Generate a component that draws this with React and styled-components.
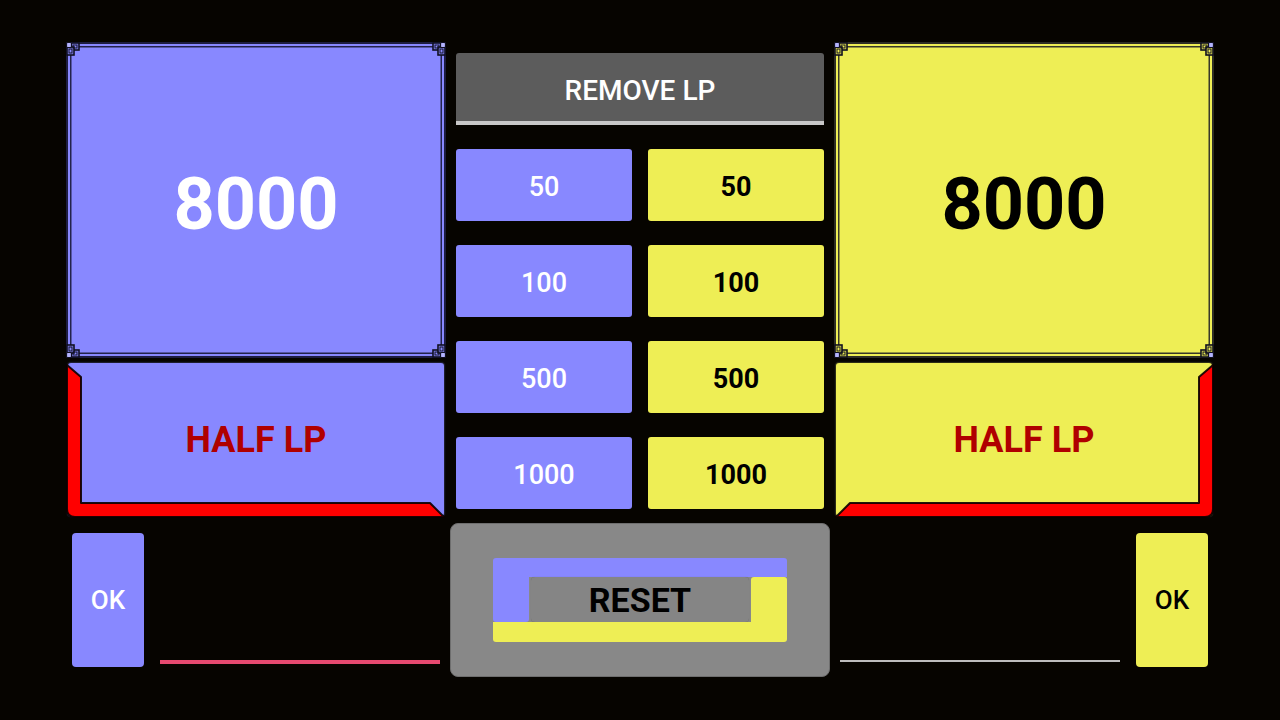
import styled, { createGlobalStyle } from 'styled-components';

const BLUE = '#8888ff';
const YELLOW = '#eeee55';

const GlobalStyle = createGlobalStyle`
    html, body {
        margin: 0;
        padding: 0;
        background: #060400;
    }
    body {
        font-family: Roboto, "Liberation Sans", sans-serif;
    }
`;

const Page = styled.div`
    width: 1148px;
    height: 720px;
    margin: 0 auto;
    padding-top: 42px;
    box-sizing: border-box;
`;

const Board = styled.div`
    display: grid;
    grid-template-columns: 380px 380px 380px;
    column-gap: 4px;
`;

const Footer = styled(Board)`
    margin-top: 5px;
    height: 154px;
`;

const PlayerColumn = styled.div`
    display: flex;
    flex-direction: column;
    gap: 3px;
`;

const LifePanel = styled.div`
    position: relative;
    height: 316px;
    box-sizing: border-box;
    padding-top: 8px;
    display: flex;
    align-items: center;
    justify-content: center;
    background: ${({ color }) => color};
    border: 2px solid rgba(10, 10, 30, 0.85);
    border-radius: 4px;
    box-shadow: inset 0 0 0 2px ${({ color }) => color}, inset 0 0 0 3.5px rgba(10, 10, 30, 0.8);
    color: ${({ dark }) => dark ? '#000' : '#fff'};
    font-size: 72px;
    font-weight: 700;
`;

const Corner = styled.svg`
    position: absolute;
    width: 16px;
    height: 16px;
    ${({ pos }) => pos.includes('t') ? 'top: -3px;' : 'bottom: -3px;'}
    ${({ pos }) => pos.includes('l') ? 'left: -3px;' : 'right: -3px;'}
    transform: scale(${({ pos }) => pos.includes('l') ? 1 : -1}, ${({ pos }) => pos.includes('t') ? 1 : -1});
`;

const Ornament = ({ pos, color }) => (
    <Corner pos={pos} viewBox="0 0 16 16">
        <rect x="6" y="2" width="8" height="7" fill={color} stroke="#101020" strokeWidth="1.6" />
        <rect x="2" y="6" width="7" height="8" fill={color} stroke="#101020" strokeWidth="1.6" />
        <rect x="8" y="4" width="4" height="3" fill="none" stroke="#101020" strokeWidth="1" />
        <rect x="4" y="8" width="3" height="4" fill="none" stroke="#101020" strokeWidth="1" />
        <rect x="1.5" y="1.5" width="5" height="5" rx="1" fill="#b4b4ff" stroke="#101020" strokeWidth="1.2" />
    </Corner>
);

const HalfButton = styled.button`
    display: grid;
    height: 157px;
    padding: 0;
    border: none;
    background: none;
    cursor: pointer;
    font-family: inherit;
`;

const HalfArt = styled.svg`
    grid-area: 1 / 1;
    width: 380px;
    height: 157px;
`;

const HalfLabel = styled.span`
    grid-area: 1 / 1;
    place-self: center;
    color: #b00000;
    font-size: 36px;
    font-weight: 700;
`;

const HalfLP = ({ color, flip }) => (
    <HalfButton>
        <HalfArt viewBox="0 0 380 157">
            <g transform={flip ? 'translate(380 0) scale(-1 1)' : undefined}>
                <rect x="1" y="1" width="378" height="155" rx="4" fill={color} stroke="rgba(10,10,10,0.85)" strokeWidth="2" />
                <path d="M1,4 L15,16 L15,142 L364,142 L378,156 L9,156 Q1,156 1,148 Z" fill="#ff0000" stroke="rgba(10,0,0,0.9)" strokeWidth="2" strokeLinejoin="round" />
            </g>
        </HalfArt>
        <HalfLabel>HALF LP</HalfLabel>
    </HalfButton>
);

const CenterColumn = styled.div`
    padding: 11px 6px 0;
`;

const Header = styled.div`
    padding-top: 6px;
    height: 62px;
    display: flex;
    align-items: center;
    justify-content: center;
    background: #5c5c5c;
    border-bottom: 4px solid #c8c8c8;
    border-radius: 3px 3px 0 0;
    color: #fff;
    font-size: 28px;
    font-weight: 500;
`;

const StepGrid = styled.div`
    margin-top: 24px;
    display: grid;
    grid-template-columns: 176px 176px;
    grid-auto-rows: 72px;
    gap: 24px 16px;
`;

const StepButton = styled.button`
    border: none;
    border-radius: 3px;
    padding: 3px 0 0;
    background: ${({ color }) => color};
    color: ${({ dark }) => dark ? '#000' : '#fff'};
    font-family: inherit;
    font-size: 27px;
    font-weight: ${({ dark }) => dark ? 700 : 500};
    cursor: pointer;
`;

const BottomCell = styled.div`
    display: flex;
    align-items: center;
    gap: 16px;
    padding: 0 6px;
    flex-direction: ${({ reverse }) => reverse ? 'row-reverse' : 'row'};
`;

const OkButton = styled.button`
    width: 72px;
    height: 134px;
    flex-shrink: 0;
    border: none;
    border-radius: 4px;
    background: ${({ color }) => color};
    color: ${({ dark }) => dark ? '#000' : '#fff'};
    font-family: inherit;
    font-size: 26px;
    font-weight: 500;
    cursor: pointer;
`;

const Underline = styled.div`
    width: 280px;
    align-self: flex-end;
    height: ${({ active }) => active ? 4 : 2}px;
    margin-bottom: ${({ active }) => active ? 13 : 15}px;
    background: ${({ active }) => active ? '#e64a70' : '#bdbdbd'};
`;

const ResetFrame = styled.button`
    display: flex;
    align-items: center;
    justify-content: center;
    padding: 0;
    background: #888888;
    border: 1px solid #6e6e6e;
    border-radius: 8px;
    cursor: pointer;
    font-family: inherit;
`;

const ResetArt = styled.div`
    display: grid;
    grid-template-columns: 36px 218px 36px;
    grid-template-rows: 19px 45px 20px;
    gap: 0 2px;
    grid-template-areas:
        "top top top"
        "left mid right"
        "bottom bottom bottom";
`;

const ArtPiece = styled.div`
    grid-area: ${({ area }) => area};
    background: ${({ color }) => color};
    border-radius: ${({ radius }) => radius};
`;

const ResetLabel = styled.div`
    grid-area: mid;
    display: flex;
    align-items: center;
    justify-content: center;
    background: #858585;
    border-radius: 4px;
    box-shadow: 0 0 1px rgba(0, 0, 0, 0.3);
    color: #000;
    font-size: 34px;
    font-weight: 700;
`;

const steps = [50, 100, 500, 1000];
const corners = ['tl', 'tr', 'bl', 'br'];

const App = () => {
    return (
        <>
            <GlobalStyle />
            <Page>
                <Board>
                    <PlayerColumn>
                        <LifePanel color={BLUE}>
                            8000
                            {corners.map(p => <Ornament key={p} pos={p} color={BLUE} />)}
                        </LifePanel>
                        <HalfLP color={BLUE} />
                    </PlayerColumn>
                    <CenterColumn>
                        <Header>REMOVE LP</Header>
                        <StepGrid>
                            {steps.flatMap(value => [
                                <StepButton key={`b${value}`} color={BLUE}>{value}</StepButton>,
                                <StepButton key={`y${value}`} color={YELLOW} dark>{value}</StepButton>
                            ])}
                        </StepGrid>
                    </CenterColumn>
                    <PlayerColumn>
                        <LifePanel color={YELLOW} dark>
                            8000
                            {corners.map(p => <Ornament key={p} pos={p} color={YELLOW} />)}
                        </LifePanel>
                        <HalfLP color={YELLOW} flip />
                    </PlayerColumn>
                </Board>
                <Footer>
                    <BottomCell>
                        <OkButton color={BLUE}>OK</OkButton>
                        <Underline active />
                    </BottomCell>
                    <ResetFrame>
                        <ResetArt>
                            <ArtPiece area="top" color={BLUE} radius="3px 3px 0 0" />
                            <ArtPiece area="left" color={BLUE} radius="0 0 3px 3px" />
                            <ResetLabel>RESET</ResetLabel>
                            <ArtPiece area="right" color={YELLOW} radius="3px 3px 0 0" />
                            <ArtPiece area="bottom" color={YELLOW} radius="0 0 3px 3px" />
                        </ResetArt>
                    </ResetFrame>
                    <BottomCell reverse>
                        <OkButton color={YELLOW} dark>OK</OkButton>
                        <Underline />
                    </BottomCell>
                </Footer>
            </Page>
        </>
    );
}

export default App;
